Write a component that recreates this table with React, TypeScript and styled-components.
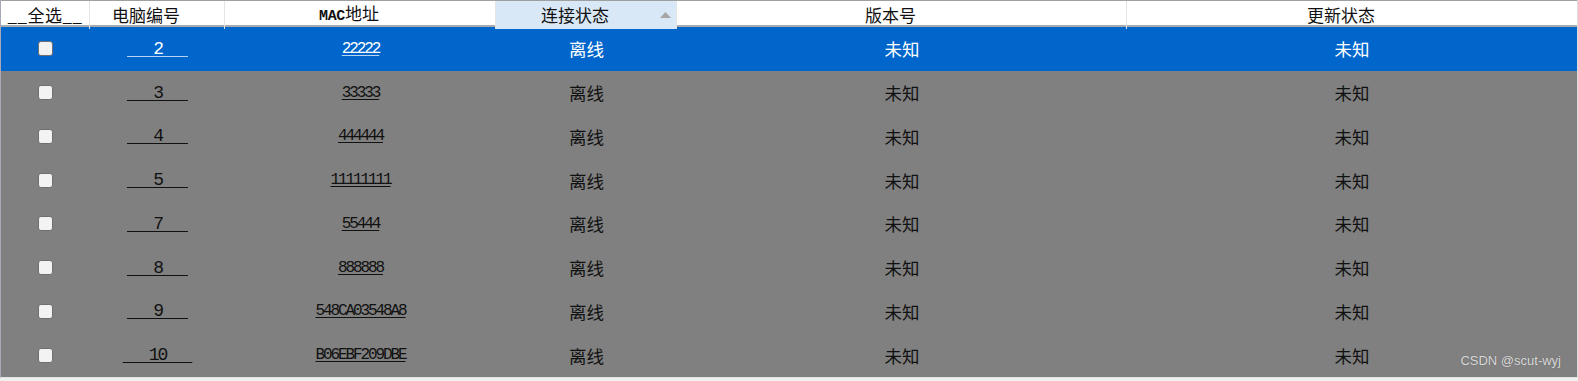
import styled, { createGlobalStyle } from "styled-components";

const GlobalStyle = createGlobalStyle`
  body {
    margin: 0;
    background: #f0f0f0;
    font-family: "Noto Sans CJK SC", "Noto Sans", sans-serif;
  }
`;

const COLUMNS = "89px 135px 271px 181px 450px 450px";

const Table = styled.div`
  position: relative;
  width: 1578px;
  box-sizing: border-box;
  border-left: 1px solid #aaa7b8;
  border-right: 1px solid #dcdcdc;
  border-bottom: 1px solid #e4e4e4;
`;

const HeaderRow = styled.div`
  display: grid;
  grid-template-columns: ${COLUMNS};
  height: 27px;
  box-sizing: border-box;
  border-top: 1px solid #a0a0a0;
  border-bottom: 2px solid #ababab;
  background: #ffffff;
`;

const HeaderCell = styled.div<{ $sorted?: boolean; $plain?: boolean; $last?: boolean }>`
  display: flex;
  align-items: center;
  box-sizing: border-box;
  padding-right: ${(p) => (p.$plain || p.$sorted ? "0" : "22px")};
  border-right: ${(p) => (p.$last ? "none" : "1px solid #e4e4e4")};
  background: ${(p) => (p.$sorted ? "#d9e8f6" : "transparent")};
  font-size: 17px;
  line-height: 24px;
  color: #111;
`;

const HeaderLabel = styled.span`
  flex: 1;
  text-align: center;
  white-space: pre;
`;

const SelectAll = styled.span`
  letter-spacing: 0.5px;
`;

const MonoWord = styled.span`
  font-family: "Liberation Mono", monospace;
  font-size: 15px;
  font-weight: bold;
  letter-spacing: -0.3px;
`;

const SortMark = styled.span`
  width: 22px;
  display: flex;
  justify-content: flex-end;
  padding-right: 5px;
  box-sizing: border-box;
`;

const Row = styled.div<{ $selected?: boolean }>`
  display: grid;
  grid-template-columns: ${COLUMNS};
  height: 43.75px;
  background: ${(p) => (p.$selected ? "#0066cc" : "#808080")};
  color: ${(p) => (p.$selected ? "#ffffff" : "#111111")};
`;

const Cell = styled.div`
  display: flex;
  align-items: center;
  justify-content: center;
  font-size: 17.5px;
`;

const Check = styled.input.attrs({ type: "checkbox" })`
  appearance: none;
  margin: 0 1px 0 0;
  width: 15px;
  height: 15px;
  box-sizing: border-box;
  border: 1px solid #6f6f6f;
  border-radius: 3px;
  background: #f3f3f3;
`;

const LinkText = styled.span<{ $size: number; $spacing: number; $selected?: boolean }>`
  font-family: "Liberation Mono", monospace;
  font-size: ${(p) => p.$size}px;
  letter-spacing: ${(p) => p.$spacing}px;
  white-space: pre;
  text-decoration: underline;
  text-decoration-color: ${(p) => (p.$selected ? "#b9d3f2" : "#111111")};
  text-underline-offset: 2px;
`;

const Watermark = styled.div`
  position: absolute;
  right: 16px;
  bottom: 9px;
  font-family: "Liberation Sans", Arial, sans-serif;
  font-size: 13px;
  color: rgba(240, 240, 240, 0.85);
  text-shadow: 0 0 1px rgba(60, 60, 60, 0.6);
`;

const computers = [
  { id: "2", mac: "22222" },
  { id: "3", mac: "33333" },
  { id: "4", mac: "444444" },
  { id: "5", mac: "11111111" },
  { id: "7", mac: "55444" },
  { id: "8", mac: "888888" },
  { id: "9", mac: "548CA03548A8" },
  { id: "10", mac: "B06EBF209DBE" },
];

export default function App() {
  return (
    <>
      <GlobalStyle />
      <Table>
        <HeaderRow>
          <HeaderCell $plain>
            <HeaderLabel>
              <SelectAll>__全选__</SelectAll>
            </HeaderLabel>
          </HeaderCell>
          <HeaderCell>
            <HeaderLabel>电脑编号</HeaderLabel>
          </HeaderCell>
          <HeaderCell>
            <HeaderLabel>
              <MonoWord>MAC</MonoWord>地址
            </HeaderLabel>
          </HeaderCell>
          <HeaderCell $sorted>
            <HeaderLabel>连接状态</HeaderLabel>
            <SortMark>
              <svg width="11" height="6" viewBox="0 0 11 6">
                <path d="M5.5 0 L11 6 L0 6 Z" fill="#a5a5a5" />
              </svg>
            </SortMark>
          </HeaderCell>
          <HeaderCell>
            <HeaderLabel>版本号</HeaderLabel>
          </HeaderCell>
          <HeaderCell $last>
            <HeaderLabel>更新状态</HeaderLabel>
          </HeaderCell>
        </HeaderRow>
        {computers.map((c, i) => (
          <Row key={c.id} $selected={i === 0}>
            <Cell>
              <Check readOnly />
            </Cell>
            <Cell>
              <LinkText $size={18} $spacing={-2.1} $selected={i === 0}>{`   ${c.id}   `}</LinkText>
            </Cell>
            <Cell>
              <LinkText $size={16} $spacing={-2.1} $selected={i === 0}>{c.mac}</LinkText>
            </Cell>
            <Cell>离线</Cell>
            <Cell>未知</Cell>
            <Cell>未知</Cell>
          </Row>
        ))}
        <Watermark>CSDN @scut-wyj</Watermark>
      </Table>
    </>
  );
}
